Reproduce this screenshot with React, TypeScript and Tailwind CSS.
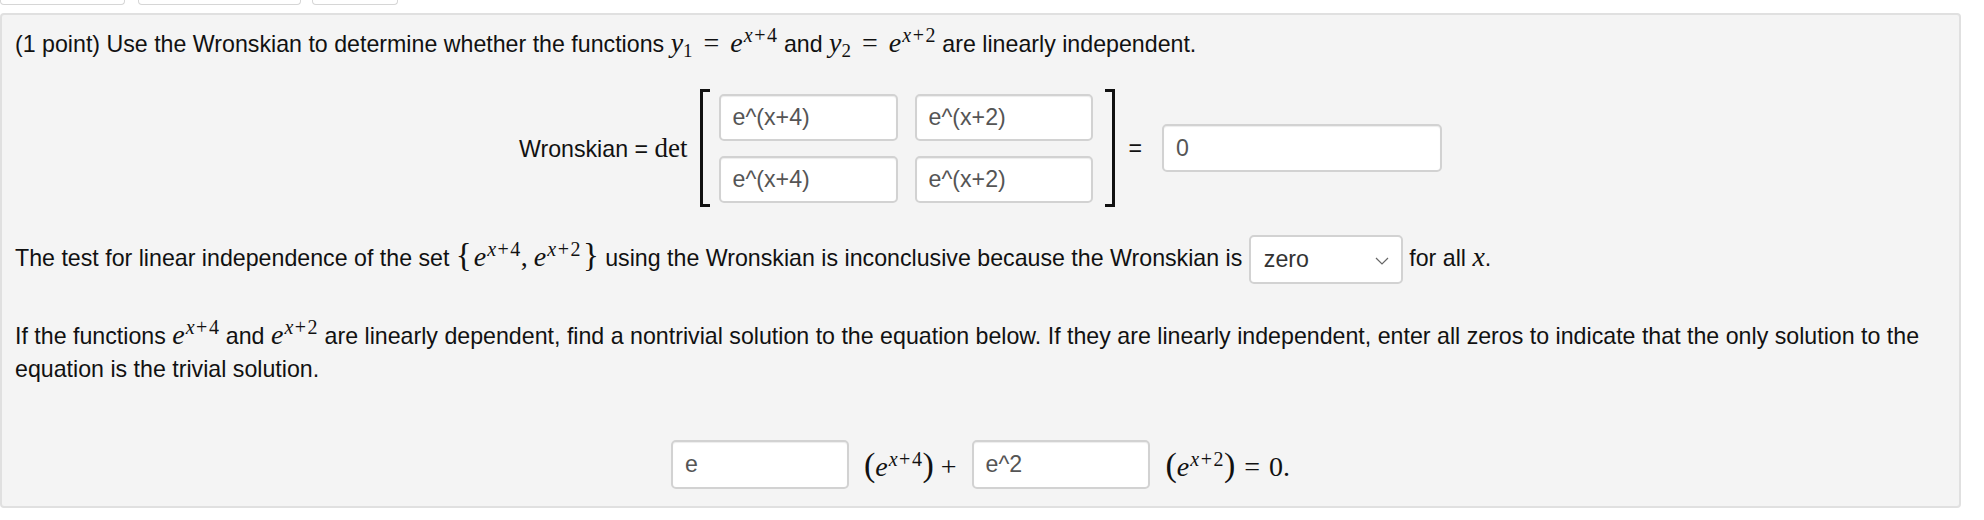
import React from "react";

function Exp({ n }: { n: string }) {
  return (
    <span className="whitespace-nowrap">
      <i>e</i>
      <sup className="text-[20px] top-[-10px] ml-[1px] tracking-[0.5px]">
        <i>x</i>
        <span className="mx-[1px]">+</span>
        {n}
      </sup>
    </span>
  );
}

function Box({ value, className }: { value: string; className: string }) {
  return (
    <div
      className={
        "bg-white border-2 border-[#d2d2d2] rounded-[5px] flex items-center pl-[12px] text-[#555] shadow-[inset_0_1px_1px_rgba(0,0,0,0.075)] " +
        className
      }
    >
      {value}
    </div>
  );
}

export default function App() {
  return (
    <div className="w-[1984px] h-[520px] bg-white overflow-hidden font-['Liberation_Sans',Arial,sans-serif] text-[23.2px] text-[#111]">
      <div className="flex h-[13px] items-start">
        <div className="w-[125px] h-[5px] bg-white border border-t-0 border-[#d6d6d6] rounded-b-[4px]" />
        <div className="ml-[13px] w-[163px] h-[5px] bg-white border border-t-0 border-[#d6d6d6] rounded-b-[4px]" />
        <div className="ml-[11px] w-[86px] h-[5px] bg-white border border-t-0 border-[#d6d6d6] rounded-b-[4px]" />
      </div>
      <div className="w-[1961px] h-[495px] bg-[#f4f4f4] border-2 border-[#e0e0e0] rounded-[4px] px-[13px] flow-root">
        <p className="mt-[13px] leading-[33px]">
          (1 point) Use the Wronskian to determine whether the functions{" "}
          <span className="font-['Liberation_Serif',serif] text-[28px] leading-none whitespace-nowrap">
            <i>y</i>
            <sub className="text-[19px]">1</sub>
            <span className="mx-[11px]">=</span>
            <Exp n="4" />
          </span>{" "}
          and{" "}
          <span className="font-['Liberation_Serif',serif] text-[28px] leading-none whitespace-nowrap">
            <i>y</i>
            <sub className="text-[19px]">2</sub>
            <span className="mx-[11px]">=</span>
            <Exp n="2" />
          </span>{" "}
          are linearly independent.
        </p>

        <div className="mt-[28px] flex justify-center items-center h-[118px]">
          <span className="whitespace-nowrap">
            Wronskian ={" "}
            <span className="font-['Liberation_Serif',serif] text-[27px]">det</span>
          </span>
          <div className="ml-[12px] w-[10px] h-[118px] border-l-[3px] border-t-[3px] border-b-[3px] border-[#111]" />
          <div className="ml-[9px] grid grid-cols-2 gap-x-[17px] gap-y-[15px]">
            <Box value="e^(x+4)" className="w-[179px] h-[47px]" />
            <Box value="e^(x+2)" className="w-[178px] h-[47px]" />
            <Box value="e^(x+4)" className="w-[179px] h-[47px]" />
            <Box value="e^(x+2)" className="w-[178px] h-[47px]" />
          </div>
          <div className="ml-[11px] w-[10px] h-[118px] border-r-[3px] border-t-[3px] border-b-[3px] border-[#111]" />
          <span className="ml-[14px]">=</span>
          <Box value="0" className="ml-[20px] w-[280px] h-[48px]" />
        </div>

        <p className="mt-[28px] leading-[33px]">
          The test for linear independence of the set{" "}
          <span className="font-['Liberation_Serif',serif] text-[28px] leading-none whitespace-nowrap">
            <span className="text-[33px] mr-[2px]">{"{"}</span>
            <Exp n="4" />
            <span className="mr-[6px]">,</span>
            <Exp n="2" />
            <span className="text-[33px] ml-[2px]">{"}"}</span>
          </span>{" "}
          using the Wronskian is inconclusive because the Wronskian is{" "}
          <span className="inline-flex items-center justify-between align-middle w-[154px] h-[49px] bg-white border-2 border-[#d2d2d2] rounded-[5px] pl-[13px] pr-[12px] text-[#333]">
            zero
            <svg width="14" height="8" viewBox="0 0 14 8" className="mt-[2px]">
              <polyline points="1,1 7,7 13,1" fill="none" stroke="#666" strokeWidth="1.2" />
            </svg>
          </span>{" "}
          for all{" "}
          <span className="font-['Liberation_Serif',serif] text-[28px] leading-none">
            <i>x</i>
          </span>
          .
        </p>

        <p className="mt-[36px] leading-[33px]">
          If the functions{" "}
          <span className="font-['Liberation_Serif',serif] text-[28px] leading-none">
            <Exp n="4" />
          </span>{" "}
          and{" "}
          <span className="font-['Liberation_Serif',serif] text-[28px] leading-none">
            <Exp n="2" />
          </span>{" "}
          are linearly dependent, find a nontrivial solution to the equation below. If they are linearly independent, enter all zeros to indicate that the only solution to the equation is the trivial solution.
        </p>

        <div className="mt-[54px] flex justify-center items-center">
          <Box value="e" className="w-[178px] h-[49px]" />
          <span className="ml-[15px] font-['Liberation_Serif',serif] text-[28px] leading-none whitespace-nowrap">
            <span className="text-[34px]">(</span>
            <Exp n="4" />
            <span className="text-[34px]">)</span>
            <span className="ml-[7px]">+</span>
          </span>
          <Box value="e^2" className="ml-[15px] w-[178px] h-[49px]" />
          <span className="ml-[16px] font-['Liberation_Serif',serif] text-[28px] leading-none whitespace-nowrap">
            <span className="text-[34px]">(</span>
            <Exp n="2" />
            <span className="text-[34px]">)</span>
            <span className="mx-[9px]">=</span>0.
          </span>
        </div>
      </div>
    </div>
  );
}
